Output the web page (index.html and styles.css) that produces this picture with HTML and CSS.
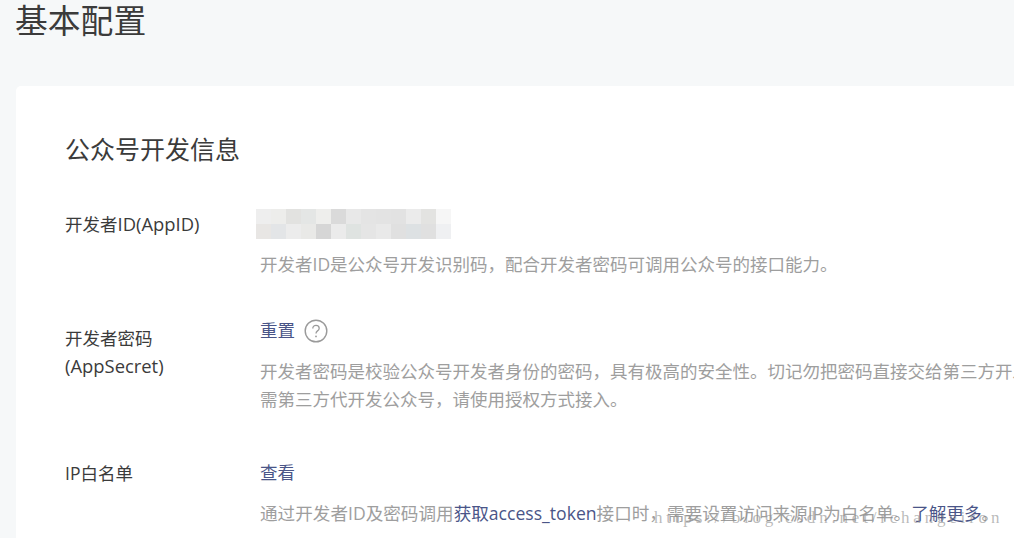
FILE: index.html
```html
<!DOCTYPE html>
<html lang="zh-CN">
  <head>
    <meta charset="utf-8" />
    <title>基本配置</title>
    <link rel="stylesheet" href="styles.css">
  </head>
  <body>
    <h1 class="page-title">基本配置</h1>

    <div class="card">
      <h2 class="card-title">公众号开发信息</h2>

      <!-- 开发者ID -->
      <div class="row row-id">
        <div class="label">开发者<span class="en">ID(AppID)</span></div>
        <div class="value">
          <div class="mosaic">
            <span></span><span></span><span></span><span></span><span></span><span></span><span></span><span></span><span></span><span></span><span></span><span></span><span></span>
            <span></span><span></span><span></span><span></span><span></span><span></span><span></span><span></span><span></span><span></span><span></span><span></span><span></span>
          </div>
          <p class="desc">开发者ID是公众号开发识别码，配合开发者密码可调用公众号的接口能力。</p>
        </div>
      </div>

      <!-- 开发者密码 -->
      <div class="row row-secret">
        <div class="label">开发者密码<br><span class="en">(AppSecret)</span></div>
        <div class="value">
          <div class="action">
            <a class="link" href="#">重置</a>
            <svg class="help" width="24" height="24" viewBox="0 0 24 24" fill="none">
              <circle cx="12" cy="12" r="10.8" stroke="#9a9a9a" stroke-width="1.4" />
              <path d="M8.8 9.4c0-1.9 1.4-3.1 3.2-3.1s3.2 1.2 3.2 2.9c0 1.3-.7 2-1.7 2.7-1 .7-1.5 1.2-1.5 2.5" stroke="#9a9a9a" stroke-width="1.3" />
              <circle cx="12" cy="17.4" r=".9" fill="#9a9a9a" />
            </svg>
          </div>
          <p class="desc">开发者密码是校验公众号开发者身份的密码，具有极高的安全性。切记勿把密码直接交给第三方开发者或直接存储在代码中。如<br>需第三方代开发公众号，请使用授权方式接入。</p>
        </div>
      </div>

      <!-- IP白名单 -->
      <div class="row row-ip">
        <div class="label">IP白名单</div>
        <div class="value">
          <div class="action">
            <a class="link" href="#">查看</a>
          </div>
          <p class="desc">通过开发者ID及密码调用<a class="link" href="#">获取access_token</a>接口时，需要设置访问来源IP为白名单。<a class="link" href="#">了解更多</a>。</p>
        </div>
      </div>
    </div>

    <div class="watermark">https://blog.csdn.net/rchangeiron</div>
  </body>
</html>
```

FILE: styles.css
```css
* {
  margin: 0;
  padding: 0;
  box-sizing: border-box;
}

html,
body {
  height: 538px;
  overflow: hidden;
}

body {
  position: relative;
  background-color: #f6f8f9;
  color: #3b3b3b;
  font-family: "Open Sans", "Noto Sans CJK SC", sans-serif;
  padding-left: 16px;
}

/* 页面标题 */
.page-title {
  font-size: 32.8px;
  font-weight: 400;
  line-height: 42px;
  margin-left: -1px;
}

/* 卡片 */
.card {
  height: 452px;
  margin-top: 44px;
  padding: 43px 0 0 49px;
  background-color: #fff;
  border-radius: 5px 0 0 0;
  overflow: hidden;
}

.card-title {
  font-size: 25px;
  font-weight: 400;
  line-height: 40px;
  margin-bottom: 38px;
}

.row {
  display: flex;
}

.row-secret {
  margin-top: 39px;
}

.row-ip {
  margin-top: 46px;
}

.label {
  width: 190px;
  flex-shrink: 0;
  font-size: 17.5px;
  line-height: 28px;
}

/* 英文部分比中文略宽 */
.en {
  font-size: 18.4px;
}

.row-id .label {
  padding-top: 3px;
}

.row-secret .label {
  padding-top: 7px;
}

.value {
  flex: 1;
  min-width: 0;
}

/* 打码区域 */
.mosaic {
  display: grid;
  grid-template-columns: repeat(13, 15px);
  grid-auto-rows: 15px;
  width: 195px;
  margin-left: 1px;
}

.mosaic span:nth-child(1) { background-color: #eeeeee; }
.mosaic span:nth-child(2) { background-color: #ededeb; }
.mosaic span:nth-child(3) { background-color: #e2e2e0; }
.mosaic span:nth-child(4) { background-color: #e4e6e5; }
.mosaic span:nth-child(5) { background-color: #eeeeec; }
.mosaic span:nth-child(6) { background-color: #dadada; }
.mosaic span:nth-child(7) { background-color: #e8e8e8; }
.mosaic span:nth-child(8) { background-color: #e4e4e4; }
.mosaic span:nth-child(9) { background-color: #e3e3e3; }
.mosaic span:nth-child(10) { background-color: #e2e2e2; }
.mosaic span:nth-child(11) { background-color: #ebebeb; }
.mosaic span:nth-child(12) { background-color: #e3e3e1; }
.mosaic span:nth-child(13) { background-color: #f6f6f6; }
.mosaic span:nth-child(14) { background-color: #e8e6e4; }
.mosaic span:nth-child(15) { background-color: #e3e5e7; }
.mosaic span:nth-child(16) { background-color: #ececec; }
.mosaic span:nth-child(17) { background-color: #e9e9e7; }
.mosaic span:nth-child(18) { background-color: #d6d6d6; }
.mosaic span:nth-child(19) { background-color: #ebebeb; }
.mosaic span:nth-child(20) { background-color: #dfe3e1; }
.mosaic span:nth-child(21) { background-color: #e5e5e5; }
.mosaic span:nth-child(22) { background-color: #e9e9e9; }
.mosaic span:nth-child(23) { background-color: #e0e0e0; }
.mosaic span:nth-child(24) { background-color: #dde1e3; }
.mosaic span:nth-child(25) { background-color: #e0e0e0; }
.mosaic span:nth-child(26) { background-color: #eff0f2; }

.row-id .value {
  padding-top: 2px;
}

/* 说明文字 */
.desc {
  margin-left: 5px;
  color: #9e9e9e;
  font-size: 17.5px;
  line-height: 28px;
  white-space: nowrap;
}

.row-id .desc {
  margin-top: 11px;
}

.row-ip .desc {
  font-size: 17.6px;
}

.action {
  display: flex;
  align-items: center;
  gap: 9px;
  height: 28px;
  margin-left: 5px;
  margin-bottom: 12px;
  font-size: 17.5px;
}

.action .link {
  margin-bottom: 4px;
}

.link {
  color: #4a5588;
  text-decoration: none;
}

/* 水印 */
.watermark {
  position: absolute;
  left: 654px;
  top: 508px;
  color: rgba(140, 140, 140, 0.6);
  font-family: "Liberation Serif", serif;
  font-size: 17px;
  letter-spacing: 3.8px;
  white-space: nowrap;
}
```
